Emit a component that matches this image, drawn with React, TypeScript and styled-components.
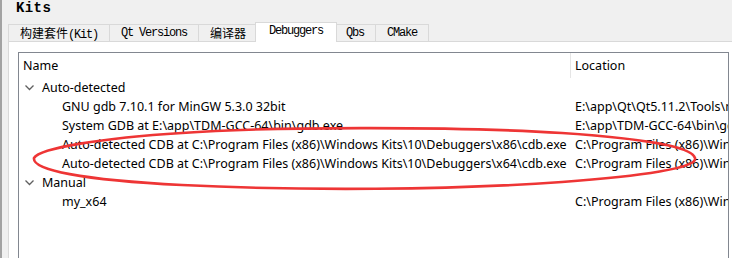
import styled, { createGlobalStyle } from "styled-components"

const GlobalStyle = createGlobalStyle`
  html, body {
    margin: 0;
    padding: 0;
    background: #f0f0f0;
  }
  body {
    width: 732px;
    height: 258px;
    overflow: hidden;
  }
`

type Row = {
  name: string
  location?: string
  depth: number
  group?: boolean
}

const rows: Row[] = [
  { name: "Auto-detected", depth: 0, group: true },
  {
    name: "GNU gdb 7.10.1 for MinGW 5.3.0 32bit",
    location: "E:\\app\\Qt\\Qt5.11.2\\Tools\\mingw530_32\\bin\\gdb.exe",
    depth: 1,
  },
  {
    name: "System GDB at E:\\app\\TDM-GCC-64\\bin\\gdb.exe",
    location: "E:\\app\\TDM-GCC-64\\bin\\gdb.exe",
    depth: 1,
  },
  {
    name: "Auto-detected CDB at C:\\Program Files (x86)\\Windows Kits\\10\\Debuggers\\x86\\cdb.exe",
    location: "C:\\Program Files (x86)\\Windows Kits\\10\\Debuggers\\x86\\cdb.exe",
    depth: 1,
  },
  {
    name: "Auto-detected CDB at C:\\Program Files (x86)\\Windows Kits\\10\\Debuggers\\x64\\cdb.exe",
    location: "C:\\Program Files (x86)\\Windows Kits\\10\\Debuggers\\x64\\cdb.exe",
    depth: 1,
  },
  { name: "Manual", depth: 0, group: true },
  {
    name: "my_x64",
    location: "C:\\Program Files (x86)\\Windows Kits\\10\\Debuggers\\x64\\cdb.exe",
    depth: 1,
  },
]

export default function App() {
  return (
    <Page>
      <GlobalStyle />
      <Title>Kits</Title>
      <TabBar>
        <Tab>
          <Cjk>构建套件</Cjk>(Kit)
        </Tab>
        <Tab>Qt Versions</Tab>
        <Tab>
          <Cjk>编译器</Cjk>
        </Tab>
        <Tab $active>Debuggers</Tab>
        <Tab>Qbs</Tab>
        <Tab>CMake</Tab>
      </TabBar>
      <Panel>
        <Tree>
          <Header>
            <HeadName>Name</HeadName>
            <HeadLocation>Location</HeadLocation>
          </Header>
          {rows.map((r) => (
            <TreeRow key={r.name}>
              <NameCell $depth={r.depth}>
                {r.group && (
                  <ArrowBox>
                    <svg width="9" height="6" viewBox="0 0 9 6">
                      <polyline
                        points="0.5,0.5 4.5,4.5 8.5,0.5"
                        fill="none"
                        stroke="#606060"
                        strokeWidth="1.3"
                      />
                    </svg>
                  </ArrowBox>
                )}
                {r.name}
              </NameCell>
              <LocationCell>{r.location}</LocationCell>
            </TreeRow>
          ))}
        </Tree>
      </Panel>
      <Mark width="732" height="258" viewBox="0 0 732 258">
        <path
          d="M 693 158 C 690 149, 662 140, 560 133 C 450 126, 260 127, 180 133 C 100 138, 38 148, 32 158 C 30 170, 80 180, 180 185 C 300 191, 450 190, 560 182 C 640 176, 696 168, 693 158"
          fill="none"
          stroke="#ee3535"
          strokeWidth="2.6"
          strokeLinecap="round"
        />
      </Mark>
    </Page>
  )
}

const Page = styled.div`
  position: relative;
  box-sizing: border-box;
  height: 258px;
  padding-left: 6px;
  border-left: 2px solid #a3a3a3;
  display: flex;
  flex-direction: column;
  overflow: hidden;
`

const Title = styled.h1`
  margin: 0;
  height: 22px;
  padding-left: 8px;
  font: bold 14px/16px "Liberation Mono", monospace;
  letter-spacing: 0.4px;
  color: #000;
`

const TabBar = styled.div`
  display: flex;
  align-items: flex-end;
  height: 19px;
  padding-left: 1px;
`

const Tab = styled.div<{ $active?: boolean }>`
  position: relative;
  box-sizing: border-box;
  height: ${(p) => (p.$active ? "20px" : "17px")};
  margin: ${(p) => (p.$active ? "0 -2px -1px -3px" : "0 0 0 -1px")};
  padding: ${(p) => (p.$active ? "0 13px" : "0 11px")};
  z-index: ${(p) => (p.$active ? 1 : 0)};
  background: ${(p) => (p.$active ? "#ffffff" : "#f0f0f0")};
  border: 1px solid #d9d9d9;
  border-bottom: none;
  font: 12px/16px "Liberation Mono", "Noto Sans CJK SC", monospace;
  letter-spacing: -1.2px;
  color: #000;
  white-space: nowrap;
`

const Cjk = styled.span`
  letter-spacing: 0;
  font-family: "Noto Sans CJK SC", sans-serif;
`

const Panel = styled.div`
  flex: 1;
  display: flex;
  background: #ffffff;
  border-top: 1px solid #d9d9d9;
  border-left: 1px solid #d9d9d9;
  padding: 10px 3px 0 9px;
`

const Tree = styled.div`
  flex: 1;
  display: flex;
  flex-direction: column;
  border: 1px solid #828790;
  border-bottom: none;
  overflow: hidden;
  font: 12.5px "Noto Sans", sans-serif;
  color: #000;
`

const Header = styled.div`
  display: flex;
  height: 25px;
  flex-shrink: 0;
  align-items: stretch;
`

const HeadName = styled.div`
  width: 551px;
  flex-shrink: 0;
  box-sizing: border-box;
  padding-left: 4px;
  line-height: 25px;
`

const HeadLocation = styled.div`
  flex: 1;
  border-left: 1px solid #e5e5e5;
  padding-left: 4px;
  line-height: 25px;
  white-space: nowrap;
  overflow: hidden;
`

const TreeRow = styled.div`
  display: flex;
  height: 19px;
  flex-shrink: 0;
  line-height: 19px;
  white-space: nowrap;
`

const NameCell = styled.div<{ $depth: number }>`
  width: 551px;
  flex-shrink: 0;
  box-sizing: border-box;
  display: flex;
  align-items: center;
  padding-left: ${(p) => (p.$depth === 0 ? 6 : 43)}px;
  overflow: hidden;
`

const ArrowBox = styled.span`
  display: inline-flex;
  width: 17px;
  height: 19px;
  align-items: center;
`

const LocationCell = styled.div`
  flex: 1;
  padding-left: 5px;
  overflow: hidden;
`

const Mark = styled.svg`
  position: absolute;
  left: 0;
  top: 0;
  pointer-events: none;
`
